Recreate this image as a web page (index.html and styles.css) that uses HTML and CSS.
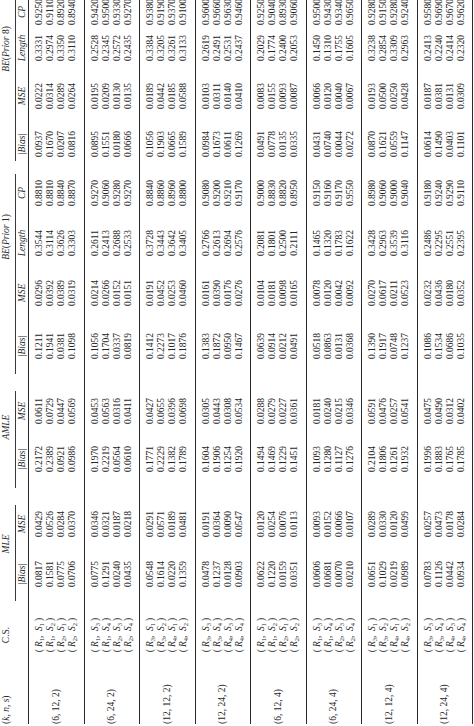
FILE: index.html
```html
<!DOCTYPE html>
<html>
<head>
<meta charset="utf-8">
<link rel="stylesheet" href="styles.css">
</head>
<body>
<div class="sheet">
  <div class="head1">
    <span class="h-kns">(<i>k</i>, <i>n</i>, <i>s</i>)</span>
    <span class="h-cs">C.S.</span>
    <span class="h-grp h-mle"><i>MLE</i></span>
    <span class="h-grp h-amle"><i>AMLE</i></span>
    <span class="h-grp h-be1"><i>BE</i>(<i>Prior</i> 1)</span>
    <span class="h-grp h-be8"><i>BE</i>(<i>Prior</i> 8)</span>
  </div>
  <div class="head2">
    <span class="label"></span>
    <div class="row">
      <span></span>
      <span>|<i>Bias</i>|</span><span><i>MSE</i></span>
      <span>|<i>Bias</i>|</span><span><i>MSE</i></span>
      <span>|<i>Bias</i>|</span><span><i>MSE</i></span><span><i>Length</i></span><span><i>CP</i></span>
      <span>|<i>Bias</i>|</span><span><i>MSE</i></span><span><i>Length</i></span><span><i>CP</i></span>
    </div>
  </div>

  <div class="group">
    <span class="label">(6, 12, 2)</span>
    <div class="rows">
      <div class="row"><span>(&thinsp;<i>R</i><sub>1</sub>,&ensp;<i>S</i><sub>1</sub>&thinsp;)</span><span>0.0817</span><span>0.0429</span><span>0.2172</span><span>0.0611</span><span>0.1211</span><span>0.0296</span><span>0.3544</span><span>0.8810</span><span>0.0937</span><span>0.0222</span><span>0.3331</span><span>0.9250</span></div>
      <div class="row"><span>(&thinsp;<i>R</i><sub>1</sub>,&ensp;<i>S</i><sub>2</sub>&thinsp;)</span><span>0.1581</span><span>0.0526</span><span>0.2389</span><span>0.0729</span><span>0.1941</span><span>0.0392</span><span>0.3114</span><span>0.8810</span><span>0.1670</span><span>0.0314</span><span>0.2974</span><span>0.9110</span></div>
      <div class="row"><span>(&thinsp;<i>R</i><sub>2</sub>,&ensp;<i>S</i><sub>1</sub>&thinsp;)</span><span>0.0775</span><span>0.0284</span><span>0.0921</span><span>0.0447</span><span>0.0381</span><span>0.0389</span><span>0.3626</span><span>0.8840</span><span>0.0207</span><span>0.0289</span><span>0.3350</span><span>0.8920</span></div>
      <div class="row"><span>(&thinsp;<i>R</i><sub>2</sub>,&ensp;<i>S</i><sub>2</sub>&thinsp;)</span><span>0.0706</span><span>0.0370</span><span>0.0986</span><span>0.0569</span><span>0.1098</span><span>0.0319</span><span>0.3303</span><span>0.8870</span><span>0.0816</span><span>0.0264</span><span>0.3110</span><span>0.8940</span></div>
    </div>
  </div>

  <div class="group">
    <span class="label">(6, 24, 2)</span>
    <div class="rows">
      <div class="row"><span>(&thinsp;<i>R</i><sub>1</sub>,&ensp;<i>S</i><sub>3</sub>&thinsp;)</span><span>0.0775</span><span>0.0346</span><span>0.1970</span><span>0.0453</span><span>0.1056</span><span>0.0214</span><span>0.2611</span><span>0.9270</span><span>0.0895</span><span>0.0195</span><span>0.2528</span><span>0.9420</span></div>
      <div class="row"><span>(&thinsp;<i>R</i><sub>1</sub>,&ensp;<i>S</i><sub>4</sub>&thinsp;)</span><span>0.1291</span><span>0.0321</span><span>0.2219</span><span>0.0563</span><span>0.1704</span><span>0.0266</span><span>0.2413</span><span>0.9060</span><span>0.1551</span><span>0.0209</span><span>0.2345</span><span>0.9500</span></div>
      <div class="row"><span>(&thinsp;<i>R</i><sub>2</sub>,&ensp;<i>S</i><sub>3</sub>&thinsp;)</span><span>0.0240</span><span>0.0187</span><span>0.0564</span><span>0.0316</span><span>0.0337</span><span>0.0152</span><span>0.2688</span><span>0.9280</span><span>0.0180</span><span>0.0130</span><span>0.2572</span><span>0.9330</span></div>
      <div class="row"><span>(&thinsp;<i>R</i><sub>2</sub>,&ensp;<i>S</i><sub>4</sub>&thinsp;)</span><span>0.0435</span><span>0.0218</span><span>0.0610</span><span>0.0411</span><span>0.0819</span><span>0.0151</span><span>0.2533</span><span>0.9270</span><span>0.0666</span><span>0.0135</span><span>0.2435</span><span>0.9270</span></div>
    </div>
  </div>

  <div class="group">
    <span class="label">(12, 12, 2)</span>
    <div class="rows">
      <div class="row"><span>(&thinsp;<i>R</i><sub>3</sub>,&ensp;<i>S</i><sub>1</sub>&thinsp;)</span><span>0.0548</span><span>0.0291</span><span>0.1771</span><span>0.0427</span><span>0.1412</span><span>0.0191</span><span>0.3728</span><span>0.8840</span><span>0.1056</span><span>0.0189</span><span>0.3384</span><span>0.9380</span></div>
      <div class="row"><span>(&thinsp;<i>R</i><sub>3</sub>,&ensp;<i>S</i><sub>2</sub>&thinsp;)</span><span>0.1614</span><span>0.0571</span><span>0.2229</span><span>0.0655</span><span>0.2273</span><span>0.0452</span><span>0.3443</span><span>0.8860</span><span>0.1903</span><span>0.0442</span><span>0.3205</span><span>0.9190</span></div>
      <div class="row"><span>(&thinsp;<i>R</i><sub>4</sub>,&ensp;<i>S</i><sub>1</sub>&thinsp;)</span><span>0.0220</span><span>0.0189</span><span>0.1382</span><span>0.0396</span><span>0.1017</span><span>0.0253</span><span>0.3642</span><span>0.8960</span><span>0.0665</span><span>0.0185</span><span>0.3261</span><span>0.9370</span></div>
      <div class="row"><span>(&thinsp;<i>R</i><sub>4</sub>,&ensp;<i>S</i><sub>2</sub>&thinsp;)</span><span>0.1359</span><span>0.0481</span><span>0.1789</span><span>0.0698</span><span>0.1876</span><span>0.0460</span><span>0.3405</span><span>0.8800</span><span>0.1589</span><span>0.0588</span><span>0.3133</span><span>0.9100</span></div>
    </div>
  </div>

  <div class="group">
    <span class="label">(12, 24, 2)</span>
    <div class="rows">
      <div class="row"><span>(&thinsp;<i>R</i><sub>3</sub>,&ensp;<i>S</i><sub>3</sub>&thinsp;)</span><span>0.0478</span><span>0.0191</span><span>0.1604</span><span>0.0305</span><span>0.1383</span><span>0.0161</span><span>0.2766</span><span>0.9080</span><span>0.0984</span><span>0.0103</span><span>0.2619</span><span>0.9600</span></div>
      <div class="row"><span>(&thinsp;<i>R</i><sub>3</sub>,&ensp;<i>S</i><sub>4</sub>&thinsp;)</span><span>0.1237</span><span>0.0364</span><span>0.1906</span><span>0.0443</span><span>0.1872</span><span>0.0390</span><span>0.2613</span><span>0.9200</span><span>0.1673</span><span>0.0311</span><span>0.2491</span><span>0.9660</span></div>
      <div class="row"><span>(&thinsp;<i>R</i><sub>4</sub>,&ensp;<i>S</i><sub>3</sub>&thinsp;)</span><span>0.0128</span><span>0.0090</span><span>0.1254</span><span>0.0308</span><span>0.0950</span><span>0.0176</span><span>0.2694</span><span>0.9210</span><span>0.0611</span><span>0.0140</span><span>0.2531</span><span>0.9630</span></div>
      <div class="row"><span>(&thinsp;<i>R</i><sub>4</sub>,&ensp;<i>S</i><sub>4</sub>&thinsp;)</span><span>0.0903</span><span>0.0547</span><span>0.1920</span><span>0.0534</span><span>0.1467</span><span>0.0276</span><span>0.2576</span><span>0.9170</span><span>0.1269</span><span>0.0410</span><span>0.2437</span><span>0.9460</span></div>
    </div>
  </div>

  <div class="group">
    <span class="label">(6, 12, 4)</span>
    <div class="rows">
      <div class="row"><span>(&thinsp;<i>R</i><sub>1</sub>,&ensp;<i>S</i><sub>1</sub>&thinsp;)</span><span>0.0622</span><span>0.0120</span><span>0.1494</span><span>0.0288</span><span>0.0639</span><span>0.0104</span><span>0.2081</span><span>0.9000</span><span>0.0491</span><span>0.0083</span><span>0.2029</span><span>0.9250</span></div>
      <div class="row"><span>(&thinsp;<i>R</i><sub>1</sub>,&ensp;<i>S</i><sub>2</sub>&thinsp;)</span><span>0.1220</span><span>0.0254</span><span>0.1469</span><span>0.0279</span><span>0.0914</span><span>0.0181</span><span>0.1801</span><span>0.8830</span><span>0.0778</span><span>0.0155</span><span>0.1774</span><span>0.9040</span></div>
      <div class="row"><span>(&thinsp;<i>R</i><sub>2</sub>,&ensp;<i>S</i><sub>1</sub>&thinsp;)</span><span>0.0159</span><span>0.0076</span><span>0.1229</span><span>0.0227</span><span>0.0212</span><span>0.0098</span><span>0.2500</span><span>0.8820</span><span>0.0135</span><span>0.0093</span><span>0.2400</span><span>0.8930</span></div>
      <div class="row"><span>(&thinsp;<i>R</i><sub>2</sub>,&ensp;<i>S</i><sub>2</sub>&thinsp;)</span><span>0.0351</span><span>0.0113</span><span>0.1451</span><span>0.0361</span><span>0.0491</span><span>0.0165</span><span>0.2111</span><span>0.8950</span><span>0.0335</span><span>0.0087</span><span>0.2053</span><span>0.9060</span></div>
    </div>
  </div>

  <div class="group">
    <span class="label">(6, 24, 4)</span>
    <div class="rows">
      <div class="row"><span>(&thinsp;<i>R</i><sub>1</sub>,&ensp;<i>S</i><sub>3</sub>&thinsp;)</span><span>0.0606</span><span>0.0093</span><span>0.1093</span><span>0.0181</span><span>0.0518</span><span>0.0078</span><span>0.1465</span><span>0.9150</span><span>0.0431</span><span>0.0066</span><span>0.1450</span><span>0.9500</span></div>
      <div class="row"><span>(&thinsp;<i>R</i><sub>1</sub>,&ensp;<i>S</i><sub>4</sub>&thinsp;)</span><span>0.0681</span><span>0.0152</span><span>0.1280</span><span>0.0240</span><span>0.0863</span><span>0.0120</span><span>0.1320</span><span>0.9160</span><span>0.0740</span><span>0.0120</span><span>0.1310</span><span>0.9430</span></div>
      <div class="row"><span>(&thinsp;<i>R</i><sub>2</sub>,&ensp;<i>S</i><sub>3</sub>&thinsp;)</span><span>0.0070</span><span>0.0066</span><span>0.1127</span><span>0.0215</span><span>0.0131</span><span>0.0042</span><span>0.1783</span><span>0.9170</span><span>0.0044</span><span>0.0040</span><span>0.1755</span><span>0.9340</span></div>
      <div class="row"><span>(&thinsp;<i>R</i><sub>2</sub>,&ensp;<i>S</i><sub>4</sub>&thinsp;)</span><span>0.0210</span><span>0.0107</span><span>0.1276</span><span>0.0346</span><span>0.0368</span><span>0.0092</span><span>0.1622</span><span>0.9550</span><span>0.0272</span><span>0.0067</span><span>0.1605</span><span>0.9650</span></div>
    </div>
  </div>

  <div class="group">
    <span class="label">(12, 12, 4)</span>
    <div class="rows">
      <div class="row"><span>(&thinsp;<i>R</i><sub>3</sub>,&ensp;<i>S</i><sub>1</sub>&thinsp;)</span><span>0.0651</span><span>0.0289</span><span>0.2104</span><span>0.0591</span><span>0.1390</span><span>0.0270</span><span>0.3428</span><span>0.8980</span><span>0.0870</span><span>0.0193</span><span>0.3238</span><span>0.9280</span></div>
      <div class="row"><span>(&thinsp;<i>R</i><sub>3</sub>,&ensp;<i>S</i><sub>2</sub>&thinsp;)</span><span>0.1029</span><span>0.0330</span><span>0.1806</span><span>0.0476</span><span>0.1917</span><span>0.0617</span><span>0.2963</span><span>0.9060</span><span>0.1621</span><span>0.0500</span><span>0.2854</span><span>0.9150</span></div>
      <div class="row"><span>(&thinsp;<i>R</i><sub>4</sub>,&ensp;<i>S</i><sub>1</sub>&thinsp;)</span><span>0.0219</span><span>0.0120</span><span>0.1261</span><span>0.0257</span><span>0.0748</span><span>0.0211</span><span>0.3539</span><span>0.9000</span><span>0.0559</span><span>0.0250</span><span>0.3309</span><span>0.9280</span></div>
      <div class="row"><span>(&thinsp;<i>R</i><sub>4</sub>,&ensp;<i>S</i><sub>2</sub>&thinsp;)</span><span>0.0989</span><span>0.0499</span><span>0.1932</span><span>0.0541</span><span>0.1237</span><span>0.0523</span><span>0.3116</span><span>0.9040</span><span>0.1147</span><span>0.0428</span><span>0.2963</span><span>0.9240</span></div>
    </div>
  </div>

  <div class="group">
    <span class="label">(12, 24, 4)</span>
    <div class="rows">
      <div class="row"><span>(&thinsp;<i>R</i><sub>3</sub>,&ensp;<i>S</i><sub>3</sub>&thinsp;)</span><span>0.0783</span><span>0.0257</span><span>0.1996</span><span>0.0475</span><span>0.1086</span><span>0.0232</span><span>0.2486</span><span>0.9180</span><span>0.0614</span><span>0.0187</span><span>0.2413</span><span>0.9580</span></div>
      <div class="row"><span>(&thinsp;<i>R</i><sub>3</sub>,&ensp;<i>S</i><sub>4</sub>&thinsp;)</span><span>0.1126</span><span>0.0473</span><span>0.1883</span><span>0.0490</span><span>0.1534</span><span>0.0436</span><span>0.2295</span><span>0.9240</span><span>0.1490</span><span>0.0381</span><span>0.2240</span><span>0.9690</span></div>
      <div class="row"><span>(&thinsp;<i>R</i><sub>4</sub>,&ensp;<i>S</i><sub>3</sub>&thinsp;)</span><span>0.0442</span><span>0.0178</span><span>0.1765</span><span>0.0312</span><span>0.0686</span><span>0.0180</span><span>0.2551</span><span>0.9290</span><span>0.0403</span><span>0.0131</span><span>0.2414</span><span>0.9670</span></div>
      <div class="row"><span>(&thinsp;<i>R</i><sub>4</sub>,&ensp;<i>S</i><sub>4</sub>&thinsp;)</span><span>0.0934</span><span>0.0284</span><span>0.1785</span><span>0.0402</span><span>0.1035</span><span>0.0352</span><span>0.2395</span><span>0.9110</span><span>0.1101</span><span>0.0309</span><span>0.2320</span><span>0.9620</span></div>
    </div>
  </div>
</div>
</body>
</html>
```

FILE: styles.css
```css
html, body {
  margin: 0;
  padding: 0;
  background: #ffffff;
}
body {
  width: 474px;
  height: 726px;
  overflow: hidden;
}
.sheet {
  width: 726px;
  height: 474px;
  transform-origin: 0 0;
  transform: translateY(726px) rotate(-90deg);
  font-family: "Liberation Serif", "Times New Roman", serif;
  font-size: 9.5px;
  color: #262626;
  background: #ffffff;
  white-space: nowrap;
}
i { font-style: italic; }
sub {
  font-size: 6.5px;
  line-height: 0;
  vertical-align: -2px;
}

/* header line 1 */
.head1 {
  display: flex;
  align-items: flex-start;
  margin-top: -2px;
  line-height: 12px;
}
.head1 > span {
  flex: none;
  padding-bottom: 3px;
}
.h-kns { width: 64px; }
.h-cs { width: 50px; text-align: center; }
.h-grp {
  text-align: center;
  border-bottom: 1px solid #3a3a3a;
  box-sizing: border-box;
}
.h-mle  { margin-left: 9px;  width: 96px;  padding-left: 18px; }
.h-amle { margin-left: 17px; width: 97px;  padding-left: 25px; }
.h-be1  { margin-left: 17px; width: 200px; padding-left: 74px; }
.h-be8  { margin-left: 13px; width: 190px; padding-left: 34px; }

/* header line 2 */
.head2 {
  display: flex;
  height: 13.2px;
  box-sizing: border-box;
  border-bottom: 1.3px solid #2a2a2a;
}
.head2 .row { height: 12px; line-height: 12px; }

/* body groups */
.group {
  display: flex;
  height: 55.5px;
  box-sizing: border-box;
  border-bottom: 1.3px solid #2a2a2a;
}
.label {
  flex: none;
  width: 64px;
  line-height: 11px;
  padding-top: 21.5px;
  box-sizing: border-box;
}
.head2 .label { padding-top: 0; }
.rows {
  padding-top: 5.2px;
}
.row {
  display: flex;
  height: 11px;
  line-height: 11px;
}
.row > span {
  flex: none;
  width: 36px;
  text-align: center;
}
.row > span:nth-child(1)  { width: 50px; }
.row > span:nth-child(2)  { margin-left: 18px; }
.row > span:nth-child(3)  { margin-left: 14px; }
.row > span:nth-child(4)  { margin-left: 29px; }
.row > span:nth-child(5)  { margin-left: 12px; }
.row > span:nth-child(6)  { margin-left: 29px; }
.row > span:nth-child(7)  { margin-left: 17px; }
.row > span:nth-child(8)  { margin-left: 14px; }
.row > span:nth-child(9)  { margin-left: 14px; }
.row > span:nth-child(10) { margin-left: 13px; }
.row > span:nth-child(11) { margin-left: 12px; }
.row > span:nth-child(12) { margin-left: 12px; }
.row > span:nth-child(13) { margin-left: 0; }
```
